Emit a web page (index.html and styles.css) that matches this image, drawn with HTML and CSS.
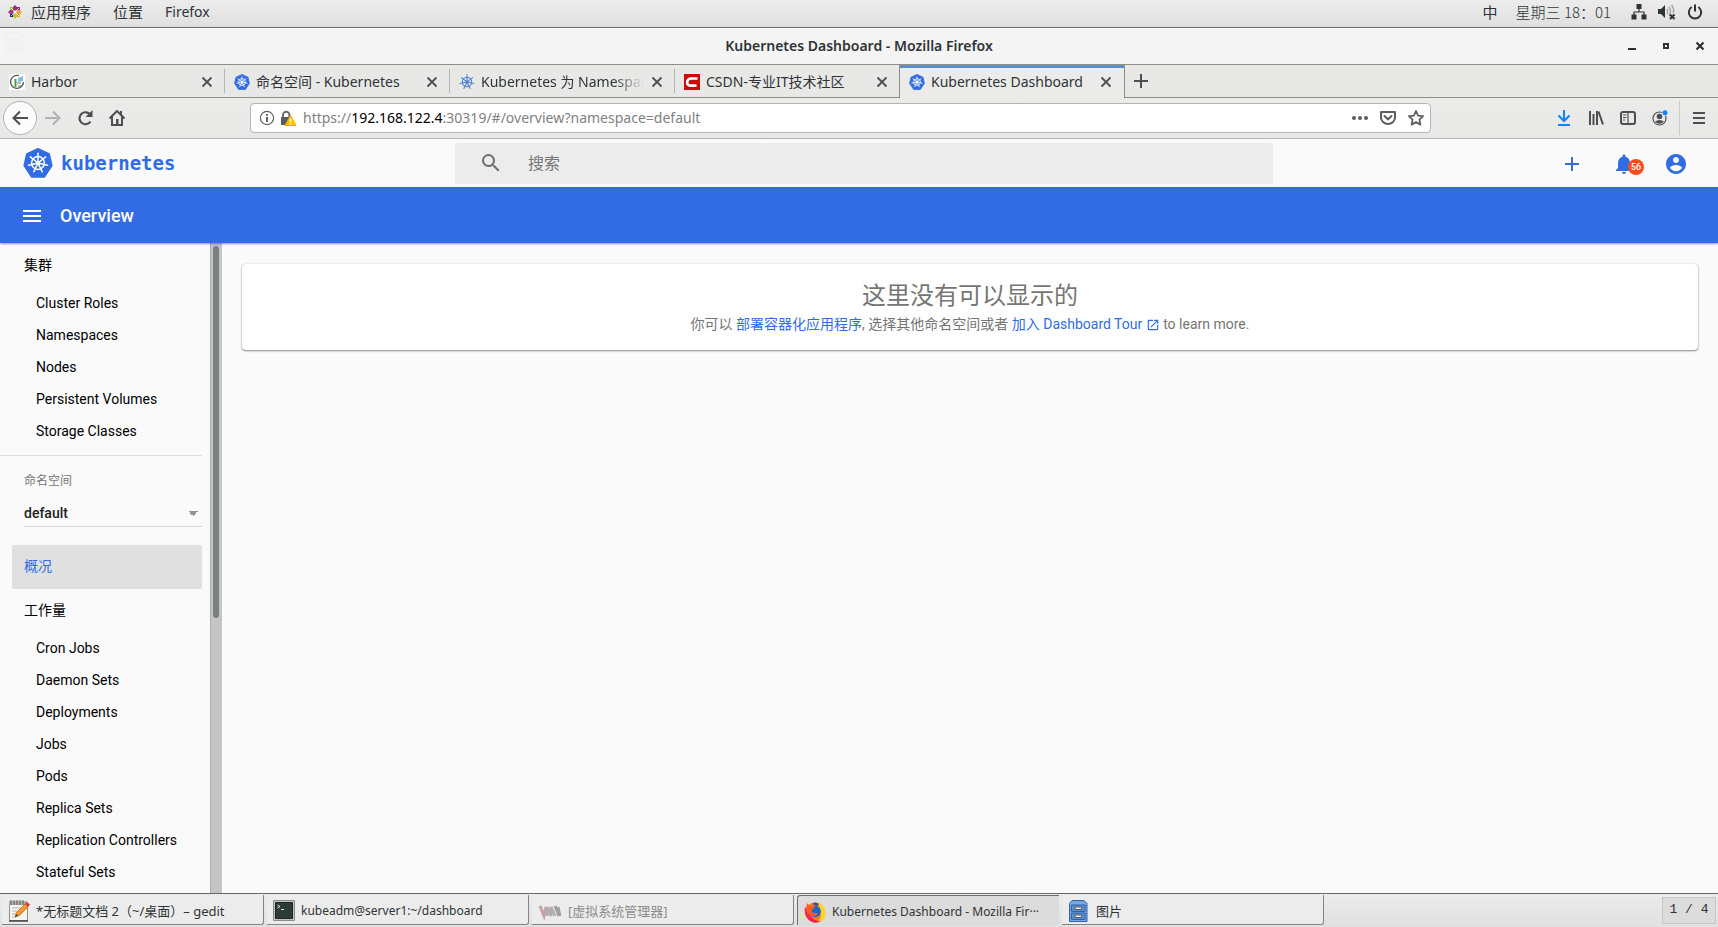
FILE: index.html
```html
<!DOCTYPE html>
<html lang="zh-CN">
<head>
<meta charset="utf-8">
<title>Kubernetes Dashboard</title>
<link rel="stylesheet" href="styles.css">
</head>
<body>
<svg class="sprite" aria-hidden="true">
  <symbol id="wheel" viewBox="0 0 30 30">
    <g fill="none" stroke="currentColor" stroke-width="1.5">
      <circle cx="15" cy="15" r="6.4"/>
      <g stroke-linecap="round">
        <path d="M15 13V5.2"/>
        <path d="M15 13V5.2" transform="rotate(51.43 15 15)"/>
        <path d="M15 13V5.2" transform="rotate(102.86 15 15)"/>
        <path d="M15 13V5.2" transform="rotate(154.29 15 15)"/>
        <path d="M15 13V5.2" transform="rotate(205.71 15 15)"/>
        <path d="M15 13V5.2" transform="rotate(257.14 15 15)"/>
        <path d="M15 13V5.2" transform="rotate(308.57 15 15)"/>
      </g>
    </g>
    <circle cx="15" cy="15" r="2.3" fill="currentColor"/>
  </symbol>
  <symbol id="kube" viewBox="0 0 30 30">
    <path d="M15 .8 26.2 6 28.8 17.6 21.3 29H8.7L1.2 17.6 3.8 6Z" fill="#326ce5" stroke="#326ce5" stroke-width="1.6" stroke-linejoin="round"/>
    <use href="#wheel" width="30" height="30" color="#fff"/>
  </symbol>
  <symbol id="close" viewBox="0 0 12 12">
    <path d="M1.5 1.5l9 9m0-9l-9 9" stroke="#4c5052" stroke-width="1.8" fill="none"/>
  </symbol>
</svg>

<header class="panel">
  <nav class="panel-menu">
    <button class="panel-item">
      <svg width="14" height="14" viewBox="0 0 14 14"><path d="M7 0l2 2v3.500H5V2z" fill="#9c2a8a"/><path d="M7 14l2-2V8.500H5V12z" fill="#b5c840"/><path d="M0 7l2-2h3.500v4H2z" fill="#a23a8f"/><path d="M14 7l-2-2H8.500v4H12z" fill="#e8a33d"/><path d="M2 2h3v3H2z" fill="#9ccd2a"/><path d="M9 2h3v3H9z" fill="#932279"/><path d="M2 9h3v3H2z" fill="#262577"/><path d="M9 9h3v3H9z" fill="#efa724"/><path d="M3 3l8 8m0-8l-8 8" stroke="#fff" stroke-width=".7"/></svg>
      <span>应用程序</span>
    </button>
    <button class="panel-item">位置</button>
    <button class="panel-item panel-app">Firefox</button>
  </nav>
  <div class="panel-status">
    <button class="panel-item">中</button>
    <time class="clock">星期三 18：01</time>
    <div class="tray">
      <svg width="16" height="16" viewBox="0 0 16 16" fill="#2e3436"><path d="M5.500 0h5v5h-5zM.5 10.500h5v5h-5zM10.500 10.500h5v5h-5z"/><path d="M8 5v3M3 11V8h10v3" fill="none" stroke="#2e3436" stroke-width="1.200"/></svg>
      <svg width="18" height="16" viewBox="0 0 18 16"><path d="M0 5h3l4-4v13l-4-4H0z" fill="#2e3436"/><path d="M9 5q1.500 2.500 0 5M11 3q3 4.500 0 9M13.500 1Q17 6 15 9" fill="none" stroke="#a5a8a8" stroke-width="1.600"/><path d="M12 10.500l4.500 4.500m0-4.500L12 15" stroke="#2e3436" stroke-width="2"/></svg>
      <svg width="16" height="16" viewBox="0 0 16 16" fill="none" stroke="#2e3436" stroke-width="2"><path d="M4.700 3A6.200 6.200 0 1 0 11.300 3M8 .5V7.500"/></svg>
    </div>
  </div>
</header>

<div class="titlebar">
  <svg class="doc-icon" width="22" height="28" viewBox="0 0 22 28" fill="none" stroke="#efefef"><path d="M.5.5h15l5 5v22H.5zM15.500.5v5h5M4 8h12M4 11h14M4 14h13M4 17h14M4 20h11"/></svg>
  <h1 class="window-title">Kubernetes Dashboard - Mozilla Firefox</h1>
  <div class="window-controls">
    <button aria-label="Minimize"><svg width="10" height="10" viewBox="0 0 10 10"><path d="M1 8h8" stroke="#2e3436" stroke-width="2"/></svg></button>
    <button aria-label="Maximize"><svg width="10" height="10" viewBox="0 0 10 10"><path d="M3 3h4v4H3z" stroke="#2e3436" stroke-width="2" fill="none"/></svg></button>
    <button aria-label="Close"><svg width="10" height="10" viewBox="0 0 10 10"><path d="M1.500 1.500l7 7m0-7l-7 7" stroke="#2e3436" stroke-width="2.200"/></svg></button>
  </div>
</div>

<div class="tabstrip" role="tablist">
  <div class="tab">
    <svg class="favicon" viewBox="0 0 16 16"><path d="M0 0h16v16H0z" fill="#fff"/><path d="M10 1.700A6.500 6.500 0 1 0 14.500 8" fill="none" stroke="#555c60" stroke-width="1.400"/><path d="M5.500 5h2v8h-2z" fill="#48a03b"/><path d="M8 9h4M9 12h3" stroke="#6a7378"/><path d="M9 4l5-2v5l-5 1z" fill="#7fbde0"/></svg>
    <button class="tab-label" role="tab">Harbor</button>
    <button class="tab-close" aria-label="Close tab"><svg width="12" height="12"><use href="#close"/></svg></button>
  </div>
  <div class="tab">
    <svg class="favicon" viewBox="0 0 30 30"><use href="#kube" width="30" height="30"/></svg>
    <button class="tab-label" role="tab">命名空间 - Kubernetes</button>
    <button class="tab-close" aria-label="Close tab"><svg width="12" height="12"><use href="#close"/></svg></button>
  </div>
  <div class="tab">
    <svg class="favicon favicon-wheel" viewBox="4 4 22 22"><use href="#wheel" width="30" height="30"/></svg>
    <button class="tab-label tab-label-fade" role="tab">Kubernetes 为 Namespace</button>
    <button class="tab-close" aria-label="Close tab"><svg width="12" height="12"><use href="#close"/></svg></button>
  </div>
  <div class="tab">
    <svg class="favicon" viewBox="0 0 16 16"><path d="M0 0h16v16H0z" fill="#c90c0c"/><path d="M13.500 4.500H7.500Q3.500 4.500 3.200 8T6.500 11.700H12.500" fill="none" stroke="#fff" stroke-width="2.700"/></svg>
    <button class="tab-label" role="tab">CSDN-专业IT技术社区</button>
    <button class="tab-close" aria-label="Close tab"><svg width="12" height="12"><use href="#close"/></svg></button>
  </div>
  <div class="tab tab-active">
    <svg class="favicon" viewBox="0 0 30 30"><use href="#kube" width="30" height="30"/></svg>
    <button class="tab-label" role="tab" aria-selected="true">Kubernetes Dashboard</button>
    <button class="tab-close" aria-label="Close tab"><svg width="12" height="12"><use href="#close"/></svg></button>
  </div>
  <div class="tab-rest">
    <button aria-label="New tab"><svg width="14" height="14" viewBox="0 0 14 14"><path d="M7 0v14M0 7h14" stroke="#4c5052" stroke-width="2"/></svg></button>
  </div>
</div>

<div class="toolbar">
  <div class="nav-buttons">
    <button class="back" aria-label="Back"><svg width="16" height="16" viewBox="0 0 16 16" fill="none" stroke="#4c5052" stroke-width="2"><path d="M16 8H1.500M8 1.500L1.500 8 8 14.500"/></svg></button>
    <button aria-label="Forward"><svg width="16" height="16" viewBox="0 0 16 16" fill="none" stroke="#b0b2b2" stroke-width="2"><path d="M0 8h14.500M8 1.500L14.500 8 8 14.500"/></svg></button>
    <button aria-label="Reload"><svg width="16" height="16" viewBox="0 0 16 16"><path d="M13.500 5A6 6 0 1 0 13.500 11.500" fill="none" stroke="#4c5052" stroke-width="2.200"/><path d="M15.500 0v7h-7z" fill="#4c5052"/></svg></button>
    <button aria-label="Home"><svg width="16" height="16" viewBox="0 0 16 16"><path d="M.5 8.500L8 1l7.500 7.500M3 7v8h10V7" fill="none" stroke="#4c5052" stroke-width="2"/><path d="M7 9h2.500v5.500H7zM11 1h2v4h-2z" fill="#4c5052"/></svg></button>
  </div>
  <div class="urlbar">
    <svg width="16" height="16" viewBox="0 0 16 16" fill="none" stroke="#606264"><circle cx="8" cy="8" r="6.600" stroke-width="1.200"/><path d="M8 7v5M8 4v1.800" stroke-width="2"/></svg>
    <svg class="lock" width="16" height="16" viewBox="0 0 16 16"><path d="M3 8V5a3.200 3.200 0 0 1 6.400 0v2" fill="none" stroke="#6b6d6f" stroke-width="2"/><path d="M1 7h11v8H1z" fill="#5a5d60"/><path d="M10.500 5.500L16 15.500H5z" fill="#ffbf00" stroke="#f5a800"/><path d="M10.500 8.500v3.500M10.500 13v1.500" stroke="#fff" stroke-width="1.600"/></svg>
    <div class="url" role="textbox" contenteditable="true" spellcheck="false" aria-label="Address">https://<b>192.168.122.4</b>:30319/#/overview?namespace=default</div>
    <div class="url-actions">
      <button aria-label="Page actions"><svg width="16" height="16" viewBox="0 0 16 16" fill="#5c5e60"><circle cx="2" cy="8" r="2"/><circle cx="8" cy="8" r="2"/><circle cx="14" cy="8" r="2"/></svg></button>
      <button aria-label="Pocket"><svg width="16" height="16" viewBox="0 0 16 16" fill="none" stroke="#5c5e60" stroke-width="2"><path d="M1 2h14v5.500a7 6.500 0 0 1-14 0z" stroke-linejoin="round"/><path d="M4.500 6L8 9.300 11.500 6" stroke-linecap="round"/></svg></button>
      <button aria-label="Bookmark"><svg width="16" height="16" viewBox="0 0 16 16" fill="none" stroke="#5c5e60" stroke-width="1.800" stroke-linejoin="round"><path d="M8 1l2.100 4.600 5 .6-3.700 3.400 1 5L8 12.100l-4.400 2.500 1-5L.9 6.200l5-.6z"/></svg></button>
    </div>
  </div>
  <div class="tool-buttons">
    <button aria-label="Downloads"><svg width="16" height="16" viewBox="0 0 16 16" fill="none" stroke="#0a84ff" stroke-width="2"><path d="M8 0v11M2.500 5.500L8 11l5.500-5.500M2 15h12"/></svg></button>
    <button aria-label="Library"><svg width="16" height="16" viewBox="0 0 16 16" stroke="#4c5052" stroke-width="2" fill="none"><path d="M2 1v14M5.500 4v11M9 1v14M10.500 1.500L15 14.500"/></svg></button>
    <button aria-label="Sidebar"><svg width="16" height="16" viewBox="0 0 16 16" fill="none" stroke="#4c5052"><rect x="1" y="2" width="14" height="12" rx="2" stroke-width="2"/><path d="M8 2v12" stroke-width="1.200"/><path d="M3 5h3.500M3 7.500h3.500M3 10h2"/></svg></button>
    <button aria-label="Account"><svg width="16" height="16" viewBox="0 0 16 16"><circle cx="7.500" cy="8.500" r="6.500" fill="none" stroke="#4c5052" stroke-width="1.200"/><circle cx="7.500" cy="6.500" r="2.800" fill="#4c5052"/><path d="M3 11.500q4.500-3 9 0-4.500 4.500-9 0z" fill="#4c5052"/><circle cx="13" cy="2.700" r="3.200" fill="#ebebea"/><circle cx="13" cy="2.700" r="2.500" fill="#0a84ff"/></svg></button>
    <button class="menu" aria-label="Menu"><svg width="12" height="12" viewBox="0 0 12 12" stroke="#4c5052" stroke-width="2"><path d="M0 1h12M0 6h12M0 11h12"/></svg></button>
  </div>
</div>

<div class="dashboard">
  <header class="kd-header">
    <a class="kd-logo" href="#">
      <svg width="30" height="30"><use href="#kube"/></svg>
      <span>kubernetes</span>
    </a>
    <label class="kd-search">
      <svg width="24" height="24" viewBox="0 0 24 24" fill="#6e6e6e"><path d="M15.500 14h-.79l-.28-.27A6.470 6.470 0 0 0 16 9.500 6.500 6.500 0 1 0 9.500 16c1.610 0 3.090-.59 4.230-1.570l.27.28v.79l5 4.990L20.490 19l-4.990-5zm-6 0C7.010 14 5 11.990 5 9.500S7.010 5 9.500 5 14 7.010 14 9.500 11.990 14 9.500 14z"/></svg>
      <input type="text" placeholder="搜索" aria-label="搜索">
    </label>
    <div class="kd-actions">
      <button aria-label="Create"><svg width="24" height="24" viewBox="0 0 24 24" fill="#326ce5"><path d="M19 13h-6v6h-2v-6H5v-2h6V5h2v6h6v2z"/></svg></button>
      <button class="bell" aria-label="Notifications"><svg width="24" height="24" viewBox="0 0 24 24" fill="#326ce5"><path d="M12 22c1.100 0 2-.9 2-2h-4c0 1.100.89 2 2 2zm6-6v-5c0-3.070-1.640-5.640-4.500-6.320V4c0-.83-.67-1.500-1.500-1.500s-1.500.67-1.500 1.500v.68C7.630 5.360 6 7.920 6 11v5l-2 2v1h16v-1l-2-2z"/></svg><span class="badge">56</span></button>
      <button aria-label="User"><svg width="24" height="24" viewBox="0 0 24 24" fill="#326ce5"><path d="M12 2C6.480 2 2 6.480 2 12s4.480 10 10 10 10-4.480 10-10S17.520 2 12 2zm0 3c1.660 0 3 1.340 3 3s-1.340 3-3 3-3-1.340-3-3 1.340-3 3-3zm0 14.200c-2.500 0-4.710-1.280-6-3.220.03-1.990 4-3.080 6-3.080 1.990 0 5.970 1.090 6 3.080-1.290 1.940-3.500 3.220-6 3.220z"/></svg></button>
    </div>
  </header>
  <div class="kd-bar">
    <button aria-label="Toggle menu"><svg width="24" height="24" viewBox="0 0 24 24" fill="#fff"><path d="M3 18h18v-2H3v2zm0-5h18v-2H3v2zm0-7v2h18V6H3z"/></svg></button>
    <h2>Overview</h2>
  </div>
  <div class="kd-body">
    <aside class="kd-side">
      <nav class="kd-nav">
        <a class="nav-group" href="#">集群</a>
        <a class="nav-item" href="#">Cluster Roles</a>
        <a class="nav-item" href="#">Namespaces</a>
        <a class="nav-item" href="#">Nodes</a>
        <a class="nav-item" href="#">Persistent Volumes</a>
        <a class="nav-item" href="#">Storage Classes</a>
        <div class="namespace">
          <label for="ns">命名空间</label>
          <select id="ns"><option>default</option></select>
        </div>
        <a class="nav-active" href="#">概况</a>
        <a class="nav-group" href="#">工作量</a>
        <a class="nav-item" href="#">Cron Jobs</a>
        <a class="nav-item" href="#">Daemon Sets</a>
        <a class="nav-item" href="#">Deployments</a>
        <a class="nav-item" href="#">Jobs</a>
        <a class="nav-item" href="#">Pods</a>
        <a class="nav-item" href="#">Replica Sets</a>
        <a class="nav-item" href="#">Replication Controllers</a>
        <a class="nav-item" href="#">Stateful Sets</a>
      </nav>
      <div class="scrollbar"><div class="thumb"></div></div>
    </aside>
    <main class="kd-main">
      <section class="card">
        <h3>这里没有可以显示的</h3>
        <p>你可以 <a href="#">部署容器化应用程序</a>, 选择其他命名空间或者 <a href="#">加入 Dashboard Tour <svg width="14" height="14" viewBox="0 0 24 24" fill="#326ce5"><path d="M19 19H5V5h7V3H5a2 2 0 0 0-2 2v14a2 2 0 0 0 2 2h14c1.100 0 2-.9 2-2v-7h-2v7zM14 3v2h3.590l-9.830 9.830 1.410 1.410L19 6.410V10h2V3h-7z"/></svg></a> to learn more.</p>
      </section>
    </main>
  </div>
</div>

<footer class="taskbar">
  <button class="task">
    <svg width="22" height="22" viewBox="0 0 22 22"><path d="M1.500 2.500h18v18h-18z" fill="#f4f4f2" stroke="#8c8c88"/><path d="M1 1h18v4H1z" fill="#aeb0a8"/><path d="M3 0v5M6 0v5M9 0v5M12 0v5M15 0v5" stroke="#5f625c"/><path d="M4 8h10M4 11h8M4 14h5M4 17h4" stroke="#b5b5b2"/><path d="M1 21h19" stroke="#444" stroke-width="1.500"/><path d="M7 17l1.500-4.500L17 4l3 3-8.500 8.500z" fill="#f79a2c" stroke="#b9651a" stroke-width=".7"/><path d="M17 4l2-2 3 2.500L20 7z" fill="#dd3c3c"/><path d="M7 17l1.300-3 2 1.700z" fill="#5a4530"/></svg>
    <span>*无标题文档 2（~/桌面）– gedit</span>
  </button>
  <button class="task task-latin">
    <svg width="22" height="22" viewBox="0 0 22 22"><path d="M.5.5h21v20H.5z" fill="#c4c5c2" stroke="#888a85"/><path d="M2.500 2.500h17v16h-17z" fill="#2c3a38" stroke="#1b2422"/><path d="M4.500 5l2.500 1.500L4.500 8M8 9.500h3" fill="none" stroke="#dfe6e2"/></svg>
    <span>kubeadm@server1:~/dashboard</span>
  </button>
  <button class="task task-dim">
    <svg width="24" height="22" viewBox="0 0 24 22" fill="none" stroke-width="3"><path d="M2 6l4 10 2-9" stroke="#c9a0a2"/><path d="M9 16V7l4 9V7l4 9" stroke="#b0b0b0"/><path d="M17 6l4 10M20 7l2 9" stroke="#a0a0a0"/></svg>
    <span>[虚拟系统管理器]</span>
  </button>
  <button class="task task-latin task-active">
    <svg width="22" height="22" viewBox="0 0 22 22"><circle cx="11" cy="11.500" r="10" fill="#ff7a1a"/><path d="M14 .5Q22 5 21.500 13T12 22Q19 16 16.500 9T14 .5z" fill="#ffd62e"/><path d="M1 6Q-.5 14 5 19t12 1Q9 20 6 14T1 6z" fill="#f0245a"/><circle cx="11" cy="10.500" r="5.800" fill="#1769c8"/><path d="M3 2l3 3q3-1.500 5 1l-3 3q-1 2 2 3l4 0q-2 4-6 3-5-1-6-6z" fill="#ff5a22"/><path d="M8 3q3-3 7 0l-2 2z" fill="#2a50b0"/></svg>
    <span>Kubernetes Dashboard - Mozilla Fir···</span>
  </button>
  <button class="task">
    <svg width="22" height="22" viewBox="0 0 22 22"><path d="M4 .5h12l3 3v18H1.500v-18z" fill="#7ba7dc" stroke="#2f62a8"/><path d="M3.500 5h13.500v6.500H3.500zM3.500 13h13.500v6.500H3.500z" fill="#5d8fd0" stroke="#2f62a8"/><path d="M7 7h6.500v2.500H7zM7 15h6.500v2.500H7z" fill="#f2f2f0" stroke="#575b5e"/></svg>
    <span>图片</span>
  </button>
  <button class="pager">1 / 4</button>
</footer>
</body>
</html>
```
FILE: styles.css
```css
* { box-sizing: border-box; }

html, body { height: 100%; }

body {
  margin: 0;
  display: flex;
  flex-direction: column;
  overflow: hidden;
  background: #fafafa;
  color: #2e3436;
  font: 14px/20px "Noto Sans", "Noto Sans CJK SC", sans-serif;
}

.sprite { display: none; }

svg { display: block; flex: none; }

button {
  display: flex;
  align-items: center;
  margin: 0;
  padding: 0;
  border: 0;
  background: none;
  color: inherit;
  font: inherit;
}

a { text-decoration: none; }

/* Desktop panel */
.panel {
  flex: none;
  display: flex;
  justify-content: space-between;
  height: 28px;
  padding: 0 15px 3px 8px;
  border-bottom: 1px solid #666;
  background: linear-gradient(#ececec, #e0e0e0);
  font-size: 15px;
  white-space: nowrap;
}

.panel-menu, .panel-status, .tray, .panel-item {
  display: flex;
  align-items: center;
}

.panel-menu { gap: 22px; }
.panel-item { gap: 9px; }
.panel-app { font-size: 14px; }
.panel-status { gap: 18px; }
.clock { font-family: "Noto Sans CJK SC", sans-serif; font-weight: 300; }
.tray { gap: 11px; padding-left: 2px; }

/* Window title bar */
.titlebar {
  flex: none;
  display: grid;
  grid-template-columns: 1fr auto 1fr;
  align-items: center;
  height: 37px;
  padding: 0 13px 2px;
  border-top: 1px solid #fff;
  border-bottom: 1px solid #8b8e8b;
  background: #f4f4f4;
}

.doc-icon { margin-left: -7px; }
.window-title { margin: 0; font-size: 14px; line-height: 20px; font-weight: 600; }
.window-controls { display: flex; justify-content: flex-end; gap: 24px; }

/* Tab strip */
.tabstrip { flex: none; display: flex; height: 33px; background: #e8e8e7; }

.tab {
  flex: 0 0 225px;
  display: flex;
  align-items: center;
  gap: 6px;
  min-width: 0;
  padding: 2px 12px 0 9px;
  border-bottom: 1px solid #8b8e8b;
  background: linear-gradient(#b4b6b3, #b4b6b3) right center / 1px 24px no-repeat;
}

.tab:nth-child(4) { background: none; }

.favicon { width: 16px; height: 16px; }
.favicon-wheel { color: #4d83d0; }

.tab-label {
  flex: 1;
  min-width: 0;
  overflow: hidden;
  white-space: nowrap;
  text-align: left;
}

.tab-label-fade {
  margin-right: -2px;
  mask-image: linear-gradient(to right, #000 80%, transparent 98%);
}

.tab-active {
  flex-basis: 226px;
  margin-left: -1px;
  padding-bottom: 1px;
  border: solid #8b8e8b;
  border-width: 0 1px;
  background: #ebebea;
  box-shadow: inset 0 1px #8b8e8b, inset 0 3px #4a90d9;
}

.tab-rest { flex: 1; display: flex; padding-left: 9px; border-bottom: 1px solid #8b8e8b; }

/* Navigation toolbar */
.toolbar {
  flex: none;
  display: flex;
  align-items: center;
  height: 41px;
  padding: 0 13px 0 3px;
  border-bottom: 1px solid #b4b4b2;
  background: linear-gradient(#ebebea, #e8e8e7);
}

.nav-buttons { flex: 0 0 247px; display: flex; align-items: center; gap: 16px; }

.back {
  justify-content: center;
  width: 34px;
  height: 34px;
  margin-right: -8px;
  border: 1px solid #b0b2af;
  border-radius: 17px;
  background: #fcfcfc;
}

.urlbar {
  flex: 1;
  display: flex;
  align-items: center;
  height: 30px;
  padding: 0 6px 0 8px;
  border: 1px solid #b4b6b3;
  border-radius: 4px;
  background: #fff;
}

.lock { margin-left: 5px; }
.url { flex: 1; margin-left: 7px; color: #808283; white-space: nowrap; outline: 0; }
.url b { color: #000; font-weight: 400; }
.url-actions { display: flex; gap: 12px; }

.tool-buttons {
  flex: 0 0 274px;
  display: flex;
  justify-content: flex-end;
  align-items: center;
  gap: 16px;
}

.menu { height: 34px; margin-left: -5px; padding-left: 13px; border-left: 1px solid #cbcbca; }

/* Dashboard */
.dashboard {
  flex: 1;
  display: flex;
  flex-direction: column;
  min-height: 0;
  color: #000;
  font-family: Roboto, "Noto Sans CJK SC", sans-serif;
}

.kd-header {
  flex: none;
  display: grid;
  grid-template-columns: 455px 1fr 445px;
  align-items: center;
  height: 48px;
}

.kd-logo {
  display: flex;
  align-items: center;
  gap: 8px;
  padding-left: 23px;
  color: #326ce5;
  font: bold 19px/24px "DejaVu Sans Mono", monospace;
}

.kd-search {
  display: flex;
  align-items: center;
  gap: 25px;
  height: 41px;
  padding-left: 24px;
  border-radius: 2px;
  background: #ececec;
}

.kd-search input {
  flex: 1;
  padding: 1px 0 0;
  border: 0;
  outline: 0;
  background: none;
  font: 16px/24px Roboto, "Noto Sans CJK SC", sans-serif;
}

.kd-search input::placeholder { color: #757575; }

.kd-actions { display: flex; justify-content: flex-end; gap: 28px; padding: 2px 30px 0 0; }

.bell { position: relative; }

.badge {
  position: absolute;
  left: 16px;
  top: 7px;
  width: 16px;
  border-radius: 8px;
  background: #ff4a1c;
  color: #fff;
  font: 500 9px/16px Roboto, sans-serif;
  text-align: center;
}

.kd-bar {
  flex: none;
  position: relative;
  display: flex;
  align-items: center;
  gap: 16px;
  height: 56px;
  padding: 2px 20px 0;
  background: #326ce5;
  box-shadow: 0 1px 2px rgba(0, 0, 0, .4);
  color: #fff;
}

.kd-bar h2 { margin: 0; font-size: 18px; line-height: 24px; font-weight: 500; }

.kd-body { flex: 1; display: flex; min-height: 0; }

.kd-side { flex: 0 0 222px; display: flex; }

.kd-nav { flex: 1; overflow: hidden; padding: 6px 8px 0 0; }

.nav-group, .nav-item, .nav-active { display: block; color: #000; font-size: 14px; }
.nav-group { padding: 6px 24px 12px; line-height: 20px; }
.nav-item { padding-left: 36px; line-height: 32px; }

.namespace {
  margin-top: 8px;
  padding: 15px 0 18px 24px;
  border-top: 1px solid #dedede;
}

.namespace label { display: block; color: #757575; font-size: 12px; line-height: 20px; }

.namespace select {
  display: block;
  width: 100%;
  height: 36px;
  padding: 8px 0 0;
  border: 0;
  border-bottom: 1px solid #d8d8d8;
  outline: 0;
  appearance: none;
  background: linear-gradient(to top right, transparent 50%, #949494 50%) calc(100% - 9px) 20px / 5px 5px no-repeat,
    linear-gradient(to top left, transparent 50%, #949494 50%) calc(100% - 4px) 20px / 5px 5px no-repeat;
  color: #212121;
  font: 500 14px/20px Roboto, sans-serif;
}

.nav-active {
  margin: 0 0 5px 12px;
  padding: 11px 12px 13px;
  border-radius: 2px;
  background: #e0e0e0;
  color: #326ce5;
  line-height: 20px;
}

.scrollbar {
  flex: 0 0 12px;
  padding: 3px 3px 0 2px;
  border-left: 1px solid #acaeae;
  background: #c4c5c5;
}

.thumb { height: 57.5%; border-radius: 3px; background: #7b7f7f; }

.kd-main { flex: 1; padding: 21px 20px; }

.card {
  padding: 16px;
  border-radius: 4px;
  background: #fff;
  box-shadow: 0 1px 2px rgba(0, 0, 0, .45), 0 0 1px rgba(0, 0, 0, .3);
  color: #757575;
  text-align: center;
}

.card h3 { margin: 0; font-size: 24px; line-height: 32px; font-weight: 400; }
.card p { margin: 2px 0 0; line-height: 20px; }
.card a { color: #326ce5; }
.card svg { display: inline-block; vertical-align: -3px; }

/* Task bar */
.taskbar {
  flex: none;
  display: flex;
  gap: 3px;
  height: 34px;
  padding: 1px 2px 2px;
  border-top: 1px solid #6a6669;
  background: linear-gradient(#ececec, #e0e0e0);
  font-size: 13px;
}

.task {
  flex: 0 1 262px;
  gap: 6px;
  overflow: hidden;
  padding: 2px 6px 0;
  border: solid #838383;
  border-width: 0 1px 1px 0;
  border-radius: 0 0 3px 0;
  background: #ececec;
  white-space: nowrap;
}

.task-latin { font-size: 12px; }
.task-dim { color: #8c8c8c; }

.task-active { border-width: 1px 0 0 1px; border-radius: 3px 0 0 0; border-color: #6f6f6f; background: #dcdcdc; }

.pager {
  justify-content: center;
  align-self: center;
  width: 54px;
  height: 27px;
  margin-left: auto;
  border: 1px solid #c6c6c6;
  background: #dcdcdc;
  font: 13px/20px "Liberation Mono", monospace;
}
```
